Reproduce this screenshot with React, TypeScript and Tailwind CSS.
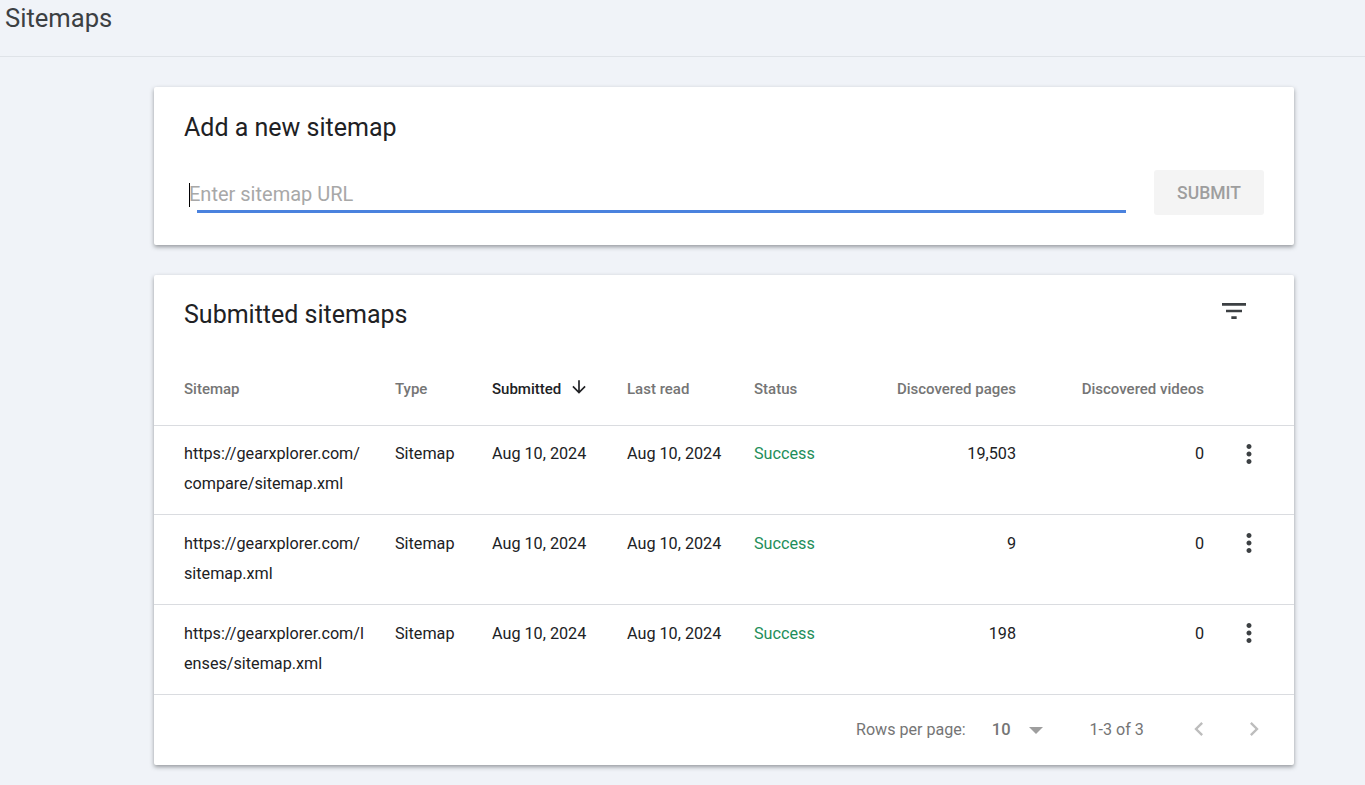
const rows = [
  { url: ['https://gearxplorer.com/', 'compare/sitemap.xml'], pages: '19,503', rowClass: 'h-[89px]', cellClass: 'pt-[13px]' },
  { url: ['https://gearxplorer.com/', 'sitemap.xml'], pages: '9', rowClass: 'h-[90px]', cellClass: 'pt-[14px]' },
  { url: ['https://gearxplorer.com/l', 'enses/sitemap.xml'], pages: '198', rowClass: 'h-[90px]', cellClass: 'pt-[14px]' },
];

const DotsIcon = () => (
  <svg width="30" height="30" viewBox="0 0 24 24" fill="#3c4043">
    <path d="M12 8c1.1 0 2-.9 2-2s-.9-2-2-2-2 .9-2 2 .9 2 2 2zm0 2c-1.1 0-2 .9-2 2s.9 2 2 2 2-.9 2-2-.9-2-2-2zm0 6c-1.1 0-2 .9-2 2s.9 2 2 2 2-.9 2-2-.9-2-2-2z" />
  </svg>
);

const App = () => {
  return (
    <div className="h-[785px] overflow-hidden bg-[#f0f3f8] font-['Roboto',sans-serif] text-[#202124]">
      <div className="h-[57px] border-b border-[#dfe3e8] pl-[5px] pt-[2px]">
        <h1 className="text-[25.6px] leading-[32px] text-[#3c4043]">Sitemaps</h1>
      </div>

      <div className="ml-[154px] w-[1140px] pt-[30px]">
        {/* Add a new sitemap */}
        <div className="h-[158px] rounded-[2px] bg-white px-[30px] pt-[25px] shadow-[0_2px_4px_rgba(60,64,67,0.5)]">
          <h2 className="text-[25px] leading-[32px] text-[#202124]">Add a new sitemap</h2>
          <div className="mt-[39px] flex items-start">
            <div className="w-[942px] pl-[5px]">
              <div className="flex h-[24px] items-center border-l border-black text-[20px] leading-[24px] text-[#a8a8a8]">
                <span className="-ml-px -mt-[2px]">Enter sitemap URL</span>
              </div>
              <div className="ml-[8px] mt-[3px] h-[3px] w-[929px] bg-[#4a82de]" />
            </div>
            <button className="ml-[28px] -mt-[13px] h-[45px] w-[110px] rounded-[3px] bg-[#f4f4f4] pt-[2px] text-[17.5px] font-medium text-[#9e9e9e]">
              SUBMIT
            </button>
          </div>
        </div>

        {/* Submitted sitemaps */}
        <div className="mt-[30px] h-[490px] rounded-[2px] bg-white shadow-[0_2px_4px_rgba(60,64,67,0.5)]">
          <div className="flex h-[78px] items-start justify-between pl-[30px] pr-[44px] pt-[24px]">
            <h2 className="text-[25px] leading-[32px] text-[#202124]">Submitted sitemaps</h2>
            <svg width="32" height="32" viewBox="0 0 24 24" fill="#3c4043" className="-mt-[4px]">
              <path d="M10 18h4v-2h-4v2zM3 6v2h18V6H3zm3 7h12v-2H6v2z" />
            </svg>
          </div>

          <table className="w-full table-fixed border-collapse text-[16.2px]">
            <colgroup>
              <col className="w-[241px]" />
              <col className="w-[97px]" />
              <col className="w-[135px]" />
              <col className="w-[127px]" />
              <col className="w-[100px]" />
              <col className="w-[162px]" />
              <col className="w-[188px]" />
              <col />
            </colgroup>
            <thead>
              <tr className="h-[72px] border-b border-[#dadce0] text-left align-top text-[15px] font-medium leading-[20px] text-[#757575]">
                <th className="pl-[30px] pt-[26px] font-medium">Sitemap</th>
                <th className="pt-[26px] font-medium">Type</th>
                <th className="pt-[26px] font-medium text-[#202124]">
                  <span className="flex items-center">
                    Submitted
                    <svg width="20" height="20" viewBox="0 0 24 24" fill="#202124" className="ml-[8px] -mt-[4px]">
                      <path d="M20 12l-1.41-1.41L13 16.17V4h-2v12.17l-5.58-5.59L4 12l8 8 8-8z" />
                    </svg>
                  </span>
                </th>
                <th className="pt-[26px] font-medium">Last read</th>
                <th className="pt-[26px] font-medium">Status</th>
                <th className="pt-[26px] text-right font-medium">Discovered pages</th>
                <th className="pt-[26px] text-right font-medium">Discovered videos</th>
                <th />
              </tr>
            </thead>
            <tbody>
              {rows.map((row) => (
                <tr key={row.url[1]} className={`${row.rowClass} border-b border-[#dadce0] align-top leading-[30px]`}>
                  <td className={`${row.cellClass} pl-[30px] whitespace-nowrap`}>
                    {row.url[0]}
                    <br />
                    {row.url[1]}
                  </td>
                  <td className={row.cellClass}>Sitemap</td>
                  <td className={row.cellClass}>Aug 10, 2024</td>
                  <td className={row.cellClass}>Aug 10, 2024</td>
                  <td className={`${row.cellClass} text-[#1e8e5a]`}>Success</td>
                  <td className={`${row.cellClass} text-right`}>{row.pages}</td>
                  <td className={`${row.cellClass} text-right`}>0</td>
                  <td className="pt-[13px] pl-[30px]">
                    <DotsIcon />
                  </td>
                </tr>
              ))}
            </tbody>
          </table>

          <div className="flex h-[70px] items-center text-[16.1px] text-[#757575]">
            <span className="ml-[702px] mt-[2px]">Rows per page:</span>
            <span className="ml-[26px] mt-[2px] text-[16.5px] font-medium">10</span>
            <svg width="14" height="7" viewBox="0 0 14 7" fill="#9e9e9e" className="ml-[18px] mt-[2px]">
              <path d="M0 0h14L7 7z" />
            </svg>
            <span className="ml-[47px] mt-[2px]">1-3 of 3</span>
            <svg width="28" height="28" viewBox="0 0 24 24" fill="#bdbdbd" className="ml-[41px] -mt-[2px]">
              <path d="M15.41 7.41L14 6l-6 6 6 6 1.41-1.41L10.83 12z" />
            </svg>
            <svg width="28" height="28" viewBox="0 0 24 24" fill="#bdbdbd" className="ml-[27px] -mt-[2px]">
              <path d="M10 6L8.59 7.41 13.17 12l-4.58 4.59L10 18l6-6z" />
            </svg>
          </div>
        </div>
      </div>
    </div>
  );
};

export default App;
